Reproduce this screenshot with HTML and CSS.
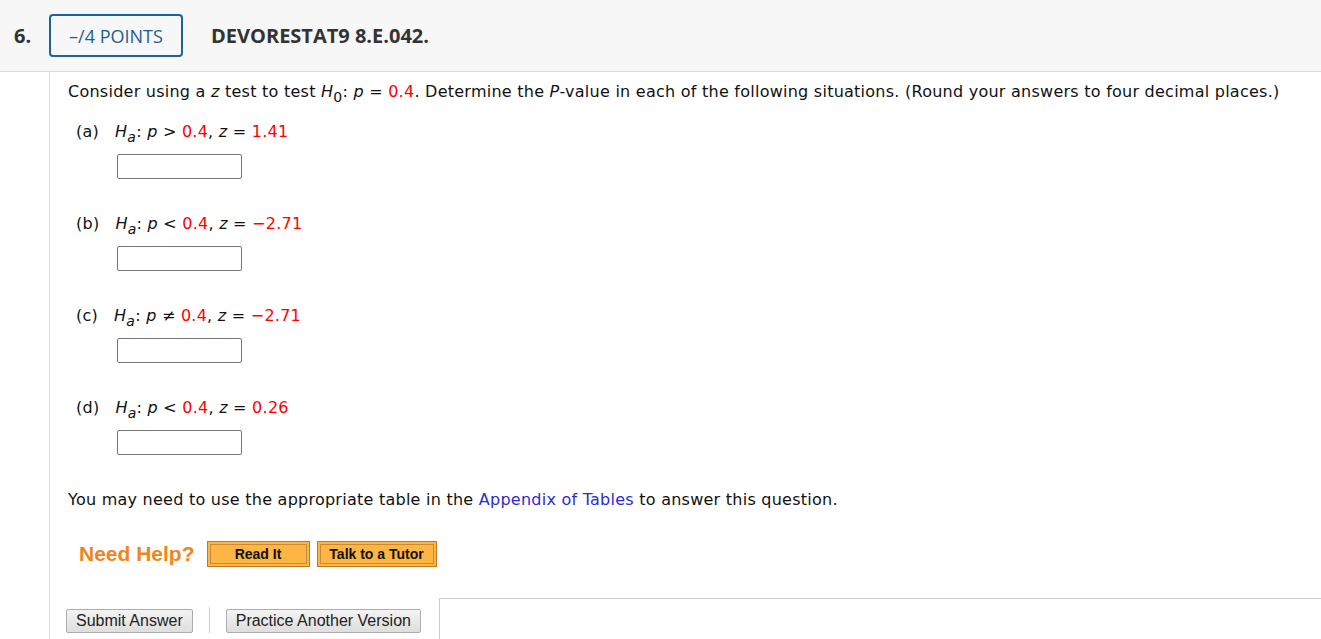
FILE: index.html
```html
<!DOCTYPE html>
<html lang="en">
<head>
    <meta charset="UTF-8">
    <link rel="stylesheet" href="styles.css">
</head>
<body>
    <div class="qhead">
        <span class="qnum">6.</span>
        <span class="points">&ndash;/4 POINTS</span>
        <span class="qref">DEVORESTAT9 8.E.042.</span>
    </div>

    <div class="qbody">
        <div class="gutter"></div>
        <div class="content">
            <p class="intro">Consider using a <i>z</i> test to test <i>H</i><sub>0</sub>: <i>p</i> = <span class="red">0.4</span>. Determine the <i>P</i>-value in each of the following situations. (Round your answers to four decimal places.)</p>

            <div class="part">
                <div class="plabel">(a)&nbsp;&nbsp; <i>H</i><sub><i>a</i></sub>: <i>p</i> &gt; <span class="red">0.4</span>, <i>z</i> = <span class="red">1.41</span></div>
                <input type="text" class="answer">
            </div>

            <div class="part">
                <div class="plabel">(b)&nbsp;&nbsp; <i>H</i><sub><i>a</i></sub>: <i>p</i> &lt; <span class="red">0.4</span>, <i>z</i> = <span class="red">&minus;2.71</span></div>
                <input type="text" class="answer">
            </div>

            <div class="part">
                <div class="plabel">(c)&nbsp;&nbsp; <i>H</i><sub><i>a</i></sub>: <i>p</i> &ne; <span class="red">0.4</span>, <i>z</i> = <span class="red">&minus;2.71</span></div>
                <input type="text" class="answer">
            </div>

            <div class="part">
                <div class="plabel">(d)&nbsp;&nbsp; <i>H</i><sub><i>a</i></sub>: <i>p</i> &lt; <span class="red">0.4</span>, <i>z</i> = <span class="red">0.26</span></div>
                <input type="text" class="answer">
            </div>

            <p class="note">You may need to use the appropriate table in the <a href="#">Appendix of Tables</a> to answer this question.</p>

            <div class="help">
                <span class="help-title">Need Help?</span>
                <button class="help-btn btn-read">Read It</button>
                <button class="help-btn btn-tutor">Talk to a Tutor</button>
            </div>

            <div class="actions">
                <button class="gray-btn">Submit Answer</button>
                <span class="sep"></span>
                <button class="gray-btn">Practice Another Version</button>
                <div class="feedback"></div>
            </div>
        </div>
    </div>
</body>
</html>
```

FILE: styles.css
```css
body {
    margin: 0;
    background: #fff;
    color: #111;
    font-family: "DejaVu Sans", Verdana, sans-serif;
    overflow: hidden;
}

.qhead {
    height: 71px;
    background-color: #f7f7f7;
    border-bottom: 1px solid #dcdcdc;
    display: flex;
    align-items: center;
    font-family: "Open Sans", sans-serif;
}

.qnum {
    width: 35px;
    padding-left: 14px;
    font-weight: bold;
    font-size: 20px;
    color: #333;
}

.points {
    box-sizing: border-box;
    width: 134px;
    height: 43px;
    border: 2px solid #1d6399;
    border-radius: 4px;
    color: #1d5e93;
    font-size: 18px;
    display: flex;
    align-items: center;
    justify-content: center;
}

.qref {
    margin-left: 28px;
    font-weight: bold;
    font-size: 20px;
    color: #333;
}

.qbody {
    display: flex;
}

.gutter {
    width: 49px;
    border-right: 1px solid #dcdcdc;
    min-height: 570px;
}

.content {
    flex: 1;
    padding: 10px 0 0 18px;
    font-size: 16px;
    line-height: 20px;
    letter-spacing: 0.25px;
}

.intro {
    margin: 0;
}

sub {
    font-size: 14px;
    line-height: 0;
    vertical-align: -5px;
}

.red {
    color: #f00;
}

.part {
    margin: 20px 0 0 8px;
}

.part + .part {
    margin-top: 35px;
}

.plabel {
    height: 20px;
}

.answer {
    display: block;
    box-sizing: border-box;
    width: 125px;
    height: 25px;
    margin: 12px 0 0 41px;
    border: 1px solid #767676;
    border-radius: 2px;
    padding: 2px;
}

.note {
    margin: 35px 0 0;
}

.note a {
    color: #2b2bd6;
    text-decoration: none;
}

.help {
    display: flex;
    align-items: center;
    margin: 31px 0 0 11px;
    height: 26px;
}

.help-title {
    font-family: "Liberation Sans", Arial, sans-serif;
    font-weight: bold;
    font-size: 21px;
    letter-spacing: 0;
    color: #f0861a;
    margin-right: 12px;
}

.help-btn {
    box-sizing: border-box;
    height: 26px;
    background-color: #fdb543;
    border: 1px solid #c47722;
    box-shadow: inset 0 0 0 2px #fdb543, inset 0 0 0 3px #c88a3a;
    font-family: "Liberation Sans", Arial, sans-serif;
    font-weight: bold;
    font-size: 14px;
    letter-spacing: 0;
    color: #111;
    padding: 0;
    margin-right: 7px;
}

.btn-read {
    width: 103px;
}

.btn-tutor {
    width: 120px;
}

.actions {
    display: flex;
    align-items: flex-start;
    margin: 31px 0 0 -2px;
}

.gray-btn {
    margin-top: 11px;
    height: 24px;
    padding: 0 9px;
    font-family: "Liberation Sans", Arial, sans-serif;
    font-size: 16px;
    letter-spacing: 0;
    color: #222;
    background: linear-gradient(#f3f3f3, #dedede);
    border: 1px solid #adadad;
    border-radius: 2px;
}

.sep {
    width: 1px;
    height: 26px;
    margin: 9px 16px 0;
    background-color: #ccc;
}

.feedback {
    flex: 1;
    height: 60px;
    margin-left: 18px;
    border-top: 1px solid #ccc;
    border-left: 1px solid #ccc;
}
```
